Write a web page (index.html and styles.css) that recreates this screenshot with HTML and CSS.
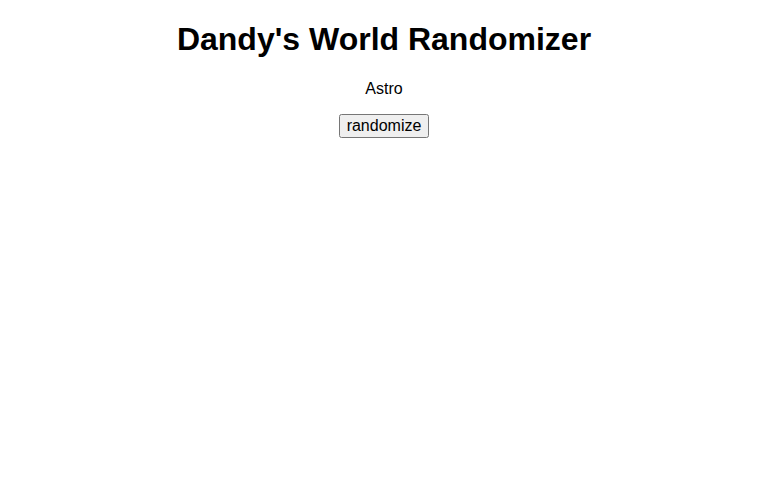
FILE: index.html
```html
<!DOCTYPE html>
<html>

<head>
  <title>Dandy's World Randomizer</title>
  <link rel="stylesheet" href="styles.css">
</head>

<body>
  <h1>Dandy's World Randomizer</h1>
  <p id="result">Astro</p>
  <p><button id="randomizeButton">randomize</button></p>

  <script>
    // Lista de personagens
    const toons = ['Astro', 'Boxten', 'Brightney', 'Cosmo', 'Finn', 'Flutter', 'Gigi', 'Glisten',
      'Goob', 'Poppy', 'Razzle & Dazzle', 'Rodger', 'Scraps', 'Shelly', 'Sprout', 'Teagan',
      'Tisha', 'Toodles', 'Vee', 'Pebble', 'Shrimpo', 'Connie', 'Looey', 'Dandy'];

    // Sorteia um personagem e mostra na tela
    function randomize() {
      const result = document.getElementById('result');
      result.textContent = toons[Math.floor(Math.random() * toons.length)];
    }

    document.getElementById('randomizeButton').addEventListener('click', randomize);
  </script>
</body>

</html>
```

FILE: styles.css
```css
body {
  font-family: "Liberation Sans", Arial, sans-serif;
  text-align: center;
  color: #000000;
  background-color: #ffffff;
  margin: 0;
}

button {
  font-family: "Liberation Sans", Arial, sans-serif;
  font-size: 16px;
}
```
